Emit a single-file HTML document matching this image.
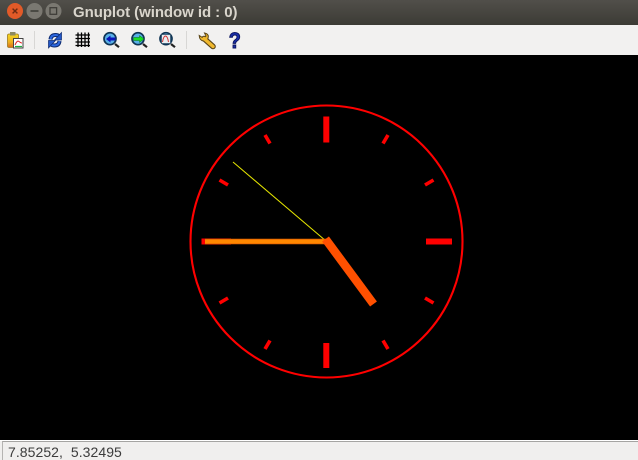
<!DOCTYPE html>
<html><head><meta charset="utf-8">
<style>
html,body{margin:0;padding:0;background:#000}
#w{position:relative;width:638px;height:460px;overflow:hidden;background:#000}
#t{position:absolute;left:0;top:0;width:638px;height:25px;background:linear-gradient(#514f4a,#3c3b35)}
#tt{position:absolute;left:73px;top:3px;font:bold 15px "Liberation Sans",sans-serif;color:#d9d5cc;white-space:nowrap;letter-spacing:-.06px;line-height:20px}
#b{position:absolute;left:0;top:25px;width:638px;height:30px;background:#f2f1f0}
#s{position:absolute;left:0;top:440px;width:638px;height:20px;background:#f0efee}
#s1{position:absolute;left:0;top:0;width:638px;height:1px;background:#fff}
#s2{position:absolute;left:2px;top:1px;width:636px;height:19px;border-top:1px solid #a5a4a2;border-left:1px solid #b5b4b2;box-sizing:border-box}
#st{position:absolute;left:8px;top:3px;font:14px "Liberation Sans",sans-serif;color:#3c3c3c;white-space:pre;line-height:19px;letter-spacing:.06px}
svg{position:absolute;left:0;top:0}
</style></head><body>
<div id="w">
<div id="t"></div>
<div id="tt">Gnuplot (window id : 0)</div>
<div id="b"></div>
<svg width="638" height="460" viewBox="0 0 638 460">
 <defs>
  <linearGradient id="cb" x1="0" y1="0" x2="0" y2="1"><stop offset="0" stop-color="#f4d820"/><stop offset=".6" stop-color="#eeb020"/><stop offset="1" stop-color="#d86a18"/></linearGradient>
 </defs>
 <!-- window buttons -->
 <circle cx="15" cy="11" r="8" fill="#e25a28"/>
 <path d="M12.600 8.600l4.800 4.800M17.400 8.600l-4.800 4.800" stroke="#6d2a12" stroke-width="1.400"/>
 <circle cx="34.500" cy="11" r="8" fill="#7a7871"/>
 <path d="M30.500 11h8" stroke="#3f3e39" stroke-width="1.600"/>
 <circle cx="53.500" cy="11" r="8" fill="#7a7871"/>
 <rect x="50" y="7.700" width="6.600" height="6.600" fill="none" stroke="#3f3e39" stroke-width="1.300"/>

 <!-- toolbar separators -->
 <rect x="34" y="31" width="1" height="18" fill="#d8d7d5"/>
 <rect x="186" y="31" width="1" height="18" fill="#d8d7d5"/>

 <!-- open/clipboard icon -->
 <rect x="7.500" y="34" width="11" height="13.500" rx="1.500" fill="url(#cb)" stroke="#9a7a20" stroke-width=".8"/>
 <rect x="10" y="32" width="5.500" height="3.500" fill="#8d8a60"/>
 <rect x="13.500" y="38.500" width="9.500" height="9.500" fill="#fff" stroke="#444" stroke-width="1"/>
 <path d="M15 45q2-5 4-3.500t3 1.500" fill="none" stroke="#e02020" stroke-width="1"/>
 <path d="M15 46.500h7" stroke="#20b040" stroke-width="1.200"/>

 <!-- refresh -->
 <path d="M50.500 39.500q.5-4.500 5-4.500 2.500 0 4 1.500" fill="none" stroke="#0d2a70" stroke-width="4"/>
 <path d="M50.500 39.500q.5-4.500 5-4.500 2.500 0 4 1.500" fill="none" stroke="#2c68e0" stroke-width="2"/>
 <path d="M61.500 32.500v7.500h-7z" fill="#2358c8" stroke="#0d2a70" stroke-width=".7"/>
 <path d="M59.500 41q-.5 4.500-5 4.500-2.500 0-4-1.500" fill="none" stroke="#0d2a70" stroke-width="4"/>
 <path d="M59.500 41q-.5 4.500-5 4.500-2.500 0-4-1.500" fill="none" stroke="#2c68e0" stroke-width="2"/>
 <path d="M48.500 48v-7.500h7z" fill="#2358c8" stroke="#0d2a70" stroke-width=".7"/>

 <!-- grid -->
 <path d="M78.500 33v14.500M82 33v14.500M85.500 33v14.500M89 33v14.500M76 35.500h14.500M76 39h14.500M76 42.500h14.500M76 46h14.500" stroke="#000" stroke-width="1.300" fill="none" transform="translate(-.5 -.5)"/>

 <!-- zoom back -->
 <g>
  <circle cx="110" cy="38.700" r="6" fill="#58b0e8" stroke="#0f3454" stroke-width="1.700"/>
  <path d="M115 44l4 3.200" stroke="#222" stroke-width="2.200"/>
  <path d="M106 39l4.500-3.500v2h5v3h-5v2z" fill="#0a14b8"/>
 </g>
 <!-- zoom forward -->
 <g>
  <circle cx="138" cy="38.700" r="6" fill="#58b0e8" stroke="#0f3454" stroke-width="1.700"/>
  <path d="M143 44l4 3.200" stroke="#222" stroke-width="2.200"/>
  <path d="M144 39l-4.500-3.500v2h-6v3h6v2z" fill="#18e028" stroke="#0c6a18" stroke-width=".5"/>
 </g>
 <!-- zoom auto -->
 <g>
  <circle cx="166" cy="38.700" r="6" fill="#6ab8e6" stroke="#0f3454" stroke-width="1.700"/>
  <path d="M171 44l4 3.200" stroke="#222" stroke-width="2.200"/>
  <rect x="161.500" y="34.500" width="9" height="9" fill="#e8eef2" stroke="#30506a" stroke-width=".8"/>
  <path d="M162.500 42q1-6 3-6t3 6" fill="none" stroke="#d03030" stroke-width="1"/>
 </g>

 <!-- wrench -->
 <path d="M204 38.500l9 8" fill="none" stroke="#5a4518" stroke-width="5.600" stroke-linecap="round"/>
 <path d="M199.200 35.500q.3 5 4.300 5.500 4.500.3 4.800-4.200.2-3-3.800-3.800l1.500 3-2.500 2.300z" fill="#efb82c" stroke="#5a4518" stroke-width="1"/>
 <path d="M204 38.500l9 8" fill="none" stroke="#f0b82e" stroke-width="3.400" stroke-linecap="round"/>

 <!-- help -->
 <text transform="translate(228.800 48) scale(.9 1)" font-family="'Liberation Sans',sans-serif" font-weight="bold" font-size="22" fill="#1a2fa8" stroke="#0c1560" stroke-width="1">?</text>

 <!-- clock -->
 <circle cx="326.500" cy="241.500" r="136" fill="none" stroke="#f00" stroke-width="2.100"/>
 <g stroke="#f00" stroke-width="6">
  <path d="M326.300 116.500v26M326.300 343v25M426 241.500h26M201.500 241.500h29.500"/>
 </g>
 <g stroke="#f00" stroke-width="3.600">
  <path d="M265 135l5 8.500M388 135l-5 8.500M219.500 180l8.500 5M433.500 180l-8.500 5M219.500 303l8.500-5M433.500 303l-8.500-5M265 349l5-8.500M388 349l-5-8.500"/>
 </g>
 <path d="M233 162l93 79" stroke="#e6e600" stroke-width="1" fill="none"/>
 <path d="M205 241.500h122" stroke="#e86400" stroke-width="5.400" fill="none"/>
 <path d="M205 241.500h122" stroke="#ff8800" stroke-width="3.800" fill="none"/>
 <path d="M325.500 239l48 65" stroke="#ff5000" stroke-width="8.500" fill="none"/>
</svg>
<div id="s"><div id="s1"></div><div id="s2"></div><div id="st">7.85252,  5.32495</div></div>
</div>
</body></html>
